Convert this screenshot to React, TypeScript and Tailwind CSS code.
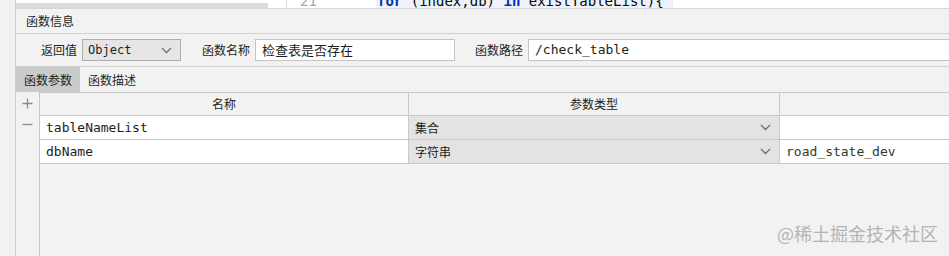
import React from "react";

const cjk = { fontFamily: '"Noto Sans CJK SC", "Noto Sans", sans-serif' };
const mono = { fontFamily: '"DejaVu Sans Mono", "Liberation Mono", monospace' };

function Chevron() {
  return (
    <svg width="11" height="7" viewBox="0 0 11 7" className="shrink-0">
      <polyline points="1,1 5.5,5.5 10,1" fill="none" stroke="#6f6f6f" strokeWidth="1.3" />
    </svg>
  );
}

const params = [
  { name: "tableNameList", type: "集合", value: "" },
  { name: "dbName", type: "字符串", value: "road_state_dev" },
];

export default function App() {
  return (
    <div className="relative w-[949px] h-[256px] overflow-hidden bg-[#f2f2f2] flex text-[#1e1e1e]" style={cjk}>
      <div className="w-[16px] shrink-0 border-r border-[#cdcdcd]" />

      <div className="flex-1 flex flex-col min-w-0">
        {/* editor strip cut off at the top */}
        <div className="h-[9px] shrink-0 flex border-b border-[#d6d6d6] bg-white overflow-hidden">
          <div className="w-[252px] flex flex-col">
            <div className="h-[3px] bg-white" />
            <div className="h-[5px] bg-[#dcdcdc]" />
          </div>
          <div className="w-[18px] bg-white" />
          <div className="w-[90px] border-l border-[#d9d9d9] bg-white">
            <div className="-mt-[8px] leading-[18px] text-[14px] text-[#a8a8a8] pl-[13px]" style={mono}>21</div>
          </div>
          <div className="w-[297px] bg-[#edf2fc]">
            <div className="-mt-[8px] leading-[18px] text-[14px] whitespace-nowrap pl-[1px]" style={mono}>
              <span className="text-[#0033b3] font-bold">for</span>
              <span className="text-[#080808]"> (index,db) </span>
              <span className="text-[#0033b3] font-bold">in</span>
              <span className="text-[#080808]"> existTableList){"{"}</span>
            </div>
          </div>
          <div className="flex-1 bg-white" />
        </div>

        {/* title */}
        <div className="h-[25px] shrink-0 flex items-center pl-[10px] text-[12px] border-b border-[#d2d2d2]">函数信息</div>

        {/* form row */}
        <div className="h-[33px] shrink-0 flex items-center border-b border-[#d2d2d2] text-[12px] whitespace-nowrap">
          <span className="ml-[25px] text-[#222]">返回值</span>
          <div className="ml-[5px] w-[99px] h-[22px] flex items-center justify-between bg-[#e5e5e5] border border-[#adadad] pl-[5px] pr-[8px]">
            <span className="text-[12px]" style={mono}>Object</span>
            <Chevron />
          </div>
          <span className="ml-[21px] text-[#222]">函数名称</span>
          <div className="ml-[5px] w-[200px] h-[22px] flex items-center bg-white border border-[#c4c4c4] pl-[6px] text-[13px]">
            检查表是否存在
          </div>
          <span className="ml-[20px] text-[#222]">函数路径</span>
          <div className="ml-[5px] flex-1 -mr-[4px] h-[22px] flex items-center bg-white border border-[#c4c4c4] pl-[6px] text-[13px]" style={mono}>
            /check_table
          </div>
        </div>

        {/* tabs */}
        <div className="h-[25px] shrink-0 flex text-[12px]">
          <div className="w-[64px] flex items-center justify-center bg-[#cbcbcb]">函数参数</div>
          <div className="w-[64px] flex items-center justify-center">函数描述</div>
        </div>

        {/* params table */}
        <div className="flex-1 flex min-h-0">
          <div className="w-[23px] shrink-0 flex flex-col items-center pt-[6px] text-[#8a8a8a]">
            <svg width="11" height="11" viewBox="0 0 11 11">
              <path d="M5.5 0.5v10M0.5 5.5h10" stroke="#8a8a8a" strokeWidth="1.3" />
            </svg>
            <svg width="11" height="11" viewBox="0 0 11 11" className="mt-[10px]">
              <path d="M0.5 5.5h10" stroke="#8a8a8a" strokeWidth="1.3" />
            </svg>
          </div>
          <div className="flex-1 border-l border-[#c6c6c6] flex flex-col min-w-0">
            <div className="h-[24px] shrink-0 flex border-y border-[#c9c9c9] text-[12px] text-[#222]">
              <div className="w-[369px] flex items-center justify-center border-r border-[#c9c9c9]">名称</div>
              <div className="w-[371px] flex items-center justify-center border-r border-[#c9c9c9]">参数类型</div>
              <div className="flex-1" />
            </div>
            {params.map((p) => (
              <div key={p.name} className="h-[24px] shrink-0 flex border-b border-[#c9c9c9]">
                <div className="w-[369px] flex items-center pl-[6px] bg-white border-r border-[#c9c9c9] text-[13px]" style={mono}>
                  {p.name}
                </div>
                <div className="w-[371px] flex items-center justify-between pl-[6px] pr-[8px] bg-[#e3e3e3] border-r border-[#c9c9c9] text-[12px]">
                  <span>{p.type}</span>
                  <Chevron />
                </div>
                <div className="flex-1 flex items-center pl-[6px] bg-white text-[13px] text-[#33391f]" style={mono}>
                  {p.value}
                </div>
              </div>
            ))}
          </div>
        </div>
      </div>

      <div className="absolute right-[11px] bottom-[9px] text-[18px] text-[#b4b4b4] tracking-[0px]">@稀土掘金技术社区</div>
    </div>
  );
}
